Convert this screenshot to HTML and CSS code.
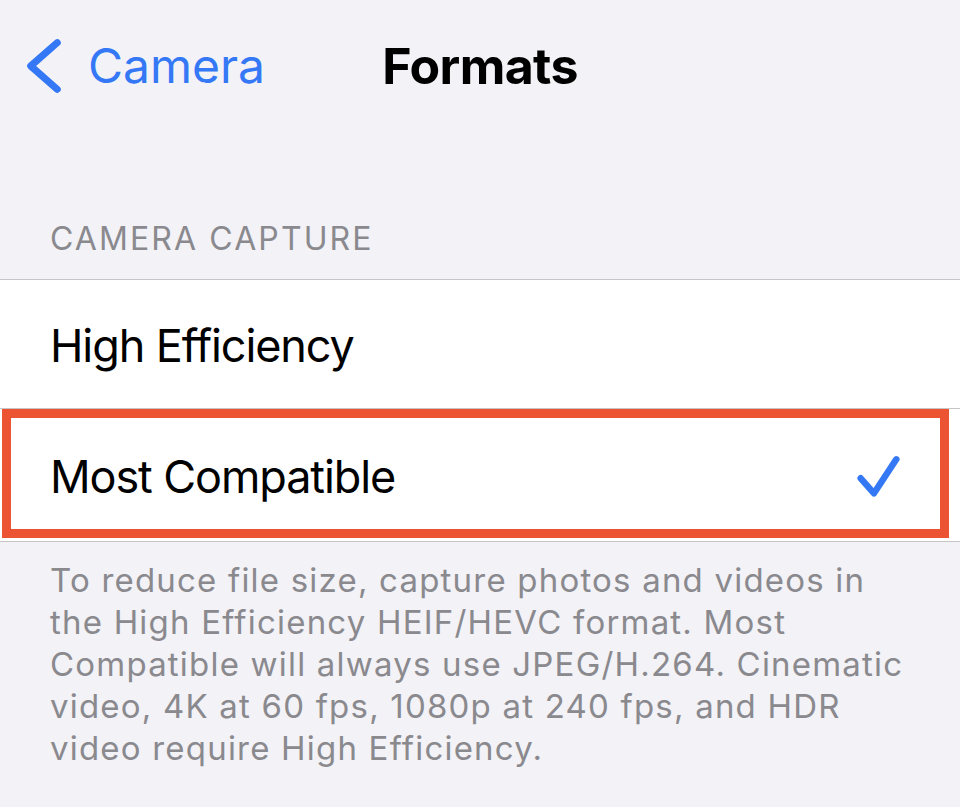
FILE: index.html
```html
<!DOCTYPE html>
<html lang="en">
<head>
<meta charset="utf-8">
<title>Formats</title>
<link rel="stylesheet" href="styles.css">
</head>
<body>
<div class="screen">
  <header class="nav">
    <div class="nav-left">
      <svg class="chevron" width="48" height="60" viewBox="0 0 48 60" aria-hidden="true">
        <path d="M37.3 6.7 L10.7 30 L37.3 53.3" fill="none" stroke="#3478f6" stroke-width="7" stroke-linecap="round" stroke-linejoin="round"/>
      </svg>
      <span class="back-label">Camera</span>
    </div>
    <h1 class="nav-title">Formats</h1>
    <div class="nav-right"></div>
  </header>

  <div class="section-header">CAMERA CAPTURE</div>

  <div class="list">
    <div class="row row-first">
      <span class="row-label">High Efficiency</span>
    </div>
    <div class="row row-selected">
      <span class="row-label">Most Compatible</span>
      <svg class="check" width="44" height="44" viewBox="0 0 44 44" aria-hidden="true">
        <path d="M3.7 24.3 L17 39.3 L39.3 5.3" fill="none" stroke="#3478f6" stroke-width="6.5" stroke-linecap="round" stroke-linejoin="round"/>
      </svg>
      <div class="highlight"></div>
    </div>
  </div>

  <p class="footer">To reduce file size, capture photos and videos in the High Efficiency HEIF/HEVC format. Most Compatible will always use JPEG/H.264. Cinematic video, 4K at 60 fps, 1080p at 240 fps, and HDR video require High Efficiency.</p>
</div>
</body>
</html>
```
FILE: styles.css
```css
html, body {
  margin: 0;
  padding: 0;
}
body {
  background: #f2f2f7;
  font-family: Inter, "Noto Sans", "Liberation Sans", sans-serif;
  width: 960px;
  height: 807px;
  overflow: hidden;
}
.screen {
  width: 960px;
}
.nav {
  height: 132px;
  display: grid;
  grid-template-columns: 1fr auto 1fr;
  align-items: center;
}
.nav-left {
  display: flex;
  align-items: center;
  padding-left: 20px;
}
.chevron {
  display: block;
  margin-right: 20px;
}
.back-label {
  color: #3478f6;
  font-size: 48px;
  line-height: 1;
}
.nav-title {
  margin: 0;
  font-size: 50px;
  font-weight: 700;
  letter-spacing: -0.6px;
  line-height: 1;
  color: #000;
}
.section-header {
  height: 147px;
  box-sizing: border-box;
  display: flex;
  align-items: flex-end;
  padding: 0 0 24px 50px;
  font-size: 32px;
  line-height: 32px;
  letter-spacing: 2.1px;
  color: #8a898e;
}
.list {
  background: #fff;
  border-top: 1px solid #c6c6c8;
  border-bottom: 1px solid #c6c6c8;
}
.row {
  display: flex;
  align-items: center;
  justify-content: space-between;
  padding: 2px 59px 0 50px;
  box-sizing: border-box;
  position: relative;
}
.row-first {
  height: 129px;
  border-bottom: 1px solid #c6c6c8;
}
.row-selected {
  height: 132px;
}
.row-label {
  font-size: 45px;
  line-height: 1;
  letter-spacing: -1.1px;
  color: #000;
}
.check {
  display: block;
}
.highlight {
  position: absolute;
  left: 2px;
  top: 0;
  width: 947px;
  height: 129px;
  box-sizing: border-box;
  border: 9px solid #ec5332;
  pointer-events: none;
}
.footer {
  margin: 0;
  padding: 17px 42px 0 50px;
  font-size: 33px;
  line-height: 42px;
  letter-spacing: 1.2px;
  color: #8a898e;
}
```
